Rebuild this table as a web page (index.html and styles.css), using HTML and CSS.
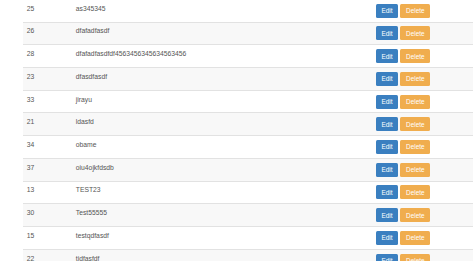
FILE: index.html
```html
<!DOCTYPE html>
<html>
<head>
<meta charset="utf-8">
<link rel="stylesheet" href="styles.css">
</head>
<body>
<table class="list">
<colgroup><col class="c-id"><col class="c-name"><col class="c-act"></colgroup>
<tbody>
<tr><td>25</td><td>as345345</td><td><div class="acts"><span class="btn edit">Edit</span><span class="btn del">Delete</span></div></td></tr>
<tr><td>26</td><td>dfafadfasdf</td><td><div class="acts"><span class="btn edit">Edit</span><span class="btn del">Delete</span></div></td></tr>
<tr><td>28</td><td>dfafadfasdfdf4563456345634563456</td><td><div class="acts"><span class="btn edit">Edit</span><span class="btn del">Delete</span></div></td></tr>
<tr><td>23</td><td>dfasdfasdf</td><td><div class="acts"><span class="btn edit">Edit</span><span class="btn del">Delete</span></div></td></tr>
<tr><td>33</td><td>jirayu</td><td><div class="acts"><span class="btn edit">Edit</span><span class="btn del">Delete</span></div></td></tr>
<tr><td>21</td><td>ldasfd</td><td><div class="acts"><span class="btn edit">Edit</span><span class="btn del">Delete</span></div></td></tr>
<tr><td>34</td><td>obame</td><td><div class="acts"><span class="btn edit">Edit</span><span class="btn del">Delete</span></div></td></tr>
<tr><td>37</td><td>oiu4ojkfdsdb</td><td><div class="acts"><span class="btn edit">Edit</span><span class="btn del">Delete</span></div></td></tr>
<tr><td>13</td><td>TEST23</td><td><div class="acts"><span class="btn edit">Edit</span><span class="btn del">Delete</span></div></td></tr>
<tr><td>30</td><td>Test55555</td><td><div class="acts"><span class="btn edit">Edit</span><span class="btn del">Delete</span></div></td></tr>
<tr><td>15</td><td>testqdfasdf</td><td><div class="acts"><span class="btn edit">Edit</span><span class="btn del">Delete</span></div></td></tr>
<tr><td>22</td><td>tidfasfdf</td><td><div class="acts"><span class="btn edit">Edit</span><span class="btn del">Delete</span></div></td></tr>
</tbody>
</table>
</body>
</html>
```

FILE: styles.css
```css
html, body {
  margin: 0;
  padding: 0;
  background: #fff;
  overflow: hidden;
}
body {
  font-family: "Liberation Sans", Arial, sans-serif;
  font-size: 6.76px;
  line-height: 1.42857;
  color: #555;
}
.list {
  margin: -1.2px 0 0 23px;
  width: 450px;
  border-collapse: collapse;
  table-layout: fixed;
}
.c-id { width: 49px; }
.c-name { width: 300px; }
.c-act { width: 101px; }
.list td {
  padding: 3.86px;
  border-top: 1px solid #e2e2e2;
  vertical-align: top;
  height: 13.98px;
}
.list tr:nth-child(odd) td { background: #fff; }
.list tr:nth-child(even) td { background: #f8f8f8; }
.acts {
  display: flex;
  gap: 2.4px;
}
.btn {
  display: block;
  font-size: 6.4px;
  line-height: 9px;
  padding: 2.5px 5.6px;
  border-radius: 1.5px;
  color: #fff;
}
.edit { background: #3a7fc0; }
.del { background: #f0ad4e; }
```
